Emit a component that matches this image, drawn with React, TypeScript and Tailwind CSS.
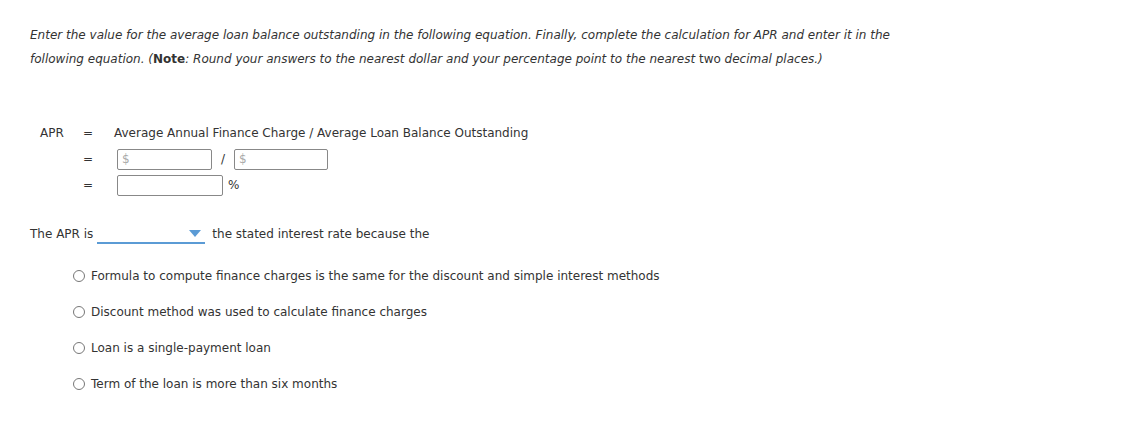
export default function App() {
  const options = [
    "Formula to compute finance charges is the same for the discount and simple interest methods",
    "Discount method was used to calculate finance charges",
    "Loan is a single-payment loan",
    "Term of the loan is more than six months",
  ];

  return (
    <div
      className="w-[1123px] h-[423px] bg-white text-[#333] text-[12px] pl-[30px] pt-[23px]"
      style={{ fontFamily: '"DejaVu Sans", Verdana, sans-serif' }}
    >
      {/* Instructions */}
      <p className="italic leading-[24px]">
        Enter the value for the average loan balance outstanding in the following equation. Finally, complete the
        calculation for APR and enter it in the
        <br />
        following equation. (<span className="font-bold not-italic">Note</span>: Round your answers to the nearest
        dollar and your percentage point to the nearest <span className="not-italic">two</span> decimal places.)
      </p>

      {/* Equation */}
      <div className="mt-[49px] pl-[10px]">
        <div className="flex items-center h-[26px]">
          <span className="w-[43px]">APR</span>
          <span className="w-[31px]">=</span>
          <span>Average Annual Finance Charge / Average Loan Balance Outstanding</span>
        </div>
        <div className="flex items-center h-[26px]">
          <span className="w-[43px]" />
          <span className="w-[34px]">=</span>
          <div className="w-[95px] h-[21px] border border-[#888] rounded-[2px] flex items-center pl-[4px] text-[#aaa]">
            $
          </div>
          <span className="w-[22px] text-center">/</span>
          <div className="w-[94px] h-[21px] border border-[#888] rounded-[2px] flex items-center pl-[4px] text-[#aaa]">
            $
          </div>
        </div>
        <div className="flex items-center h-[26px]">
          <span className="w-[43px]" />
          <span className="w-[34px]">=</span>
          <div className="w-[106px] h-[21px] border border-[#888] rounded-[2px]" />
          <span className="ml-[5px]">%</span>
        </div>
      </div>

      {/* Dropdown sentence */}
      <div className="mt-[26px] flex items-end h-[20px]">
        <span className="mr-[4px] mb-[1px]">The APR is</span>
        <div className="w-[108px] h-[20px] border-b-2 border-[#5b9bd5] flex items-center justify-end pr-[4px]">
          <svg width="12" height="7" viewBox="0 0 12 7">
            <path d="M0 0 H12 L6 7 Z" fill="#5b9bd5" />
          </svg>
        </div>
        <span className="ml-[7px] mb-[1px]">the stated interest rate because the</span>
      </div>

      {/* Options */}
      <div className="mt-[24px] pl-[43px] flex flex-col gap-[20px]">
        {options.map((o) => (
          <label key={o} className="flex items-center h-[16px]">
            <span className="w-[12px] h-[12px] rounded-full border border-[#777] mr-[6px]" />
            {o}
          </label>
        ))}
      </div>
    </div>
  );
}
